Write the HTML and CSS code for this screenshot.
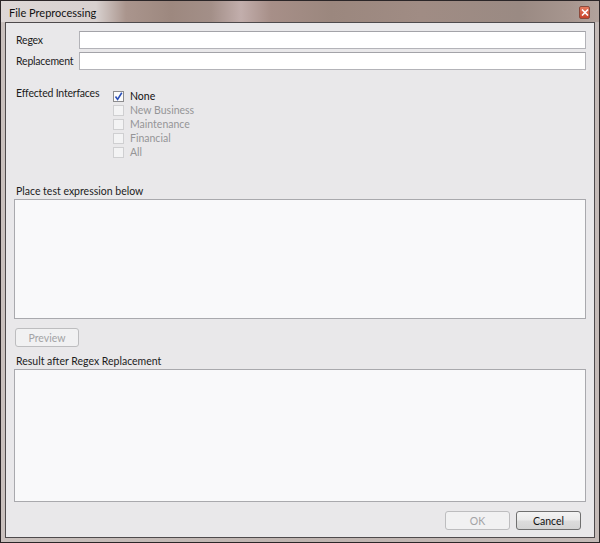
FILE: index.html
```html
<!DOCTYPE html>
<html>
<head>
<meta charset="utf-8">
<link rel="stylesheet" href="styles.css">
</head>
<body>
<div class="window">
  <div class="titlebar">
    <span class="title">File Preprocessing</span>
    <span class="close"><svg width="8" height="7" viewBox="0 0 8 7"><path d="M1 0.5 L7 6.5 M7 0.5 L1 6.5" stroke="#fff" stroke-width="1.6"/></svg></span>
  </div>
  <div class="panel">
    <div class="field-row">
      <span class="label">Regex</span>
      <div class="input"></div>
    </div>
    <div class="field-row">
      <span class="label">Replacement</span>
      <div class="input"></div>
    </div>
    <div class="group">
      <span class="label group-label">Effected Interfaces</span>
      <div class="checks">
        <div class="check on"><span class="box"><svg width="9" height="9" viewBox="0 0 9 9"><path d="M1.5 4.5 L3.6 7.4 L7.8 0.8" fill="none" stroke="#2a4fb8" stroke-width="1.6"/></svg></span><span>None</span></div>
        <div class="check off"><span class="box"></span><span>New Business</span></div>
        <div class="check off"><span class="box"></span><span>Maintenance</span></div>
        <div class="check off"><span class="box"></span><span>Financial</span></div>
        <div class="check off"><span class="box"></span><span>All</span></div>
      </div>
    </div>
    <div class="section-label test-label">Place test expression below</div>
    <div class="area area-test"></div>
    <div class="btn disabled preview">Preview</div>
    <div class="section-label">Result after Regex Replacement</div>
    <div class="area area-result"></div>
    <div class="actions">
      <div class="btn disabled">OK</div>
      <div class="btn">Cancel</div>
    </div>
  </div>
</div>
</body>
</html>
```
FILE: styles.css
```css
* { box-sizing: border-box; }
html, body { margin: 0; padding: 0; }
body {
  width: 600px;
  height: 543px;
  font-family: Lato, "Open Sans", sans-serif;
  font-size: 10.5px;
  color: #1c1c1c;
  background: #ffffff;
}
.window {
  width: 600px;
  height: 543px;
  border: 1px solid #2b2628;
  background: linear-gradient(90deg, #c9c0bd 0%, #bfb4b0 50%, #c4bab7 100%);
  display: flex;
  flex-direction: column;
  padding: 0 4px 4px 4px;
}
.titlebar {
  height: 21px;
  margin: 0 -4px;
  padding: 0 7px 0 8px;
  display: flex;
  align-items: center;
  justify-content: space-between;
  background: linear-gradient(90deg,
    #ddd7d6 0px, #d8d1cf 95px, #aa958d 125px, #9d887f 170px,
    #a38f88 210px, #c2aeac 240px, #a78f88 270px, #9b877e 330px,
    #a08c84 420px, #9a8a83 520px, #a7968f 570px, #b3a49e 600px);
}
.title {
  font-size: 11px;
  color: #111;
  padding-top: 1px;
}
.close {
  width: 11px;
  height: 13px;
  border-radius: 2px;
  background: linear-gradient(#e57a5f, #c9432a);
  border: 1px solid #8b4a3c;
  display: flex;
  align-items: center;
  justify-content: center;
  margin-right: 2px;
  margin-top: 1px;
}
.panel {
  flex: 1;
  border: 1px solid #4e4a4c;
  background: #e9e8ea;
  padding: 8px 8px 6px 8px;
  display: flex;
  flex-direction: column;
}
.field-row {
  display: flex;
  align-items: center;
  height: 18px;
  margin-bottom: 3px;
}
.label {
  padding-left: 2px;
  width: 65px;
  letter-spacing: -0.2px;
}
.input {
  flex: 1;
  height: 18px;
  background: #ffffff;
  border: 1px solid #b3b3b8;
  border-top-color: #a3a3a8;
}
.group {
  display: flex;
  margin-top: 16px;
  height: 70px;
}
.group-label {
  width: 99px;
  line-height: 14px;
  margin-top: -3px;
}
.checks {
  display: flex;
  flex-direction: column;
}
.check {
  display: flex;
  align-items: center;
  height: 14px;
}
.box {
  width: 11px;
  height: 11px;
  margin-right: 6px;
  display: flex;
  align-items: center;
  justify-content: center;
}
.check.on .box { border: 1px solid #8c8c8e; background: #fbfbfb; }
.check.off .box { border: 1px solid #cfcfd1; background: #f3f3f4; }
.check.on { color: #111; }
.check.off { color: #959597; }
.section-label {
  padding-left: 2px;
  height: 15px;
  line-height: 15px;
}
.test-label { margin-top: 25px; }
.area {
  background: #f9f9fa;
  border: 1px solid #a9a9ad;
}
.area-test { height: 120px; }
.area-result { height: 133px; }
.btn {
  width: 65px;
  height: 19px;
  border: 1px solid #707070;
  border-radius: 3px;
  background: linear-gradient(#f4f4f4 0%, #ebebeb 45%, #dcdcdc 55%, #d4d4d4 100%);
  display: flex;
  align-items: center;
  justify-content: center;
  color: #111;
}
.btn.disabled {
  border-color: #bdbdbf;
  background: #f1f1f2;
  color: #a3a3a5;
}
.preview {
  width: 64px;
  margin: 9px 0 7px 1px;
}
.actions {
  display: flex;
  justify-content: flex-end;
  gap: 6px;
  margin-top: 9px;
  padding-right: 5px;
}
```
